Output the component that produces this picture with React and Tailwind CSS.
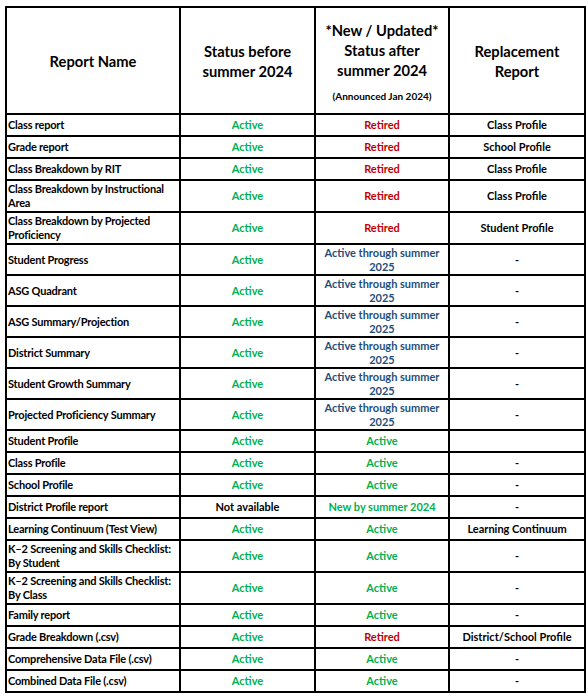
const GREEN = "text-[#00b050]";
const RED = "text-[#c00000]";
const BLUE = "text-[#1f4e79]";

const rows = [
  ["Class report", "Active", ["Retired", RED], "Class Profile"],
  ["Grade report", "Active", ["Retired", RED], "School Profile"],
  ["Class Breakdown by RIT", "Active", ["Retired", RED], "Class Profile"],
  ["Class Breakdown by Instructional Area", "Active", ["Retired", RED], "Class Profile", true],
  ["Class Breakdown by Projected Proficiency", "Active", ["Retired", RED], "Student Profile", true],
  ["Student Progress", "Active", ["Active through summer 2025", BLUE], "-", true],
  ["ASG Quadrant", "Active", ["Active through summer 2025", BLUE], "-", true],
  ["ASG Summary/Projection", "Active", ["Active through summer 2025", BLUE], "-", true],
  ["District Summary", "Active", ["Active through summer 2025", BLUE], "-", true],
  ["Student Growth Summary", "Active", ["Active through summer 2025", BLUE], "-", true],
  ["Projected Proficiency Summary", "Active", ["Active through summer 2025", BLUE], "-", true],
  ["Student Profile", "Active", ["Active", GREEN], ""],
  ["Class Profile", "Active", ["Active", GREEN], "-"],
  ["School Profile", "Active", ["Active", GREEN], "-"],
  ["District Profile report", "Not available", ["New by summer 2024", GREEN], "-"],
  ["Learning Continuum (Test View)", "Active", ["Active", GREEN], "Learning Continuum"],
  ["K–2 Screening and Skills Checklist: By Student", "Active", ["Active", GREEN], "-", true],
  ["K–2 Screening and Skills Checklist: By Class", "Active", ["Active", GREEN], "-", true],
  ["Family report", "Active", ["Active", GREEN], "-"],
  ["Grade Breakdown (.csv)", "Active", ["Retired", RED], "District/School Profile"],
  ["Comprehensive Data File (.csv)", "Active", ["Active", GREEN], "-"],
  ["Combined Data File (.csv)", "Active", ["Active", GREEN], "-"],
];

function App() {
  return (
    <div className="min-h-[697px] bg-white pl-[5px] pt-[6px] font-['Lato',sans-serif] font-bold text-black">
      <table className="w-[579px] table-fixed border-collapse border-2 border-black">
        <colgroup>
          <col className="w-[174px]" />
          <col className="w-[135px]" />
          <col className="w-[134px]" />
          <col className="w-[136px]" />
        </colgroup>
        <thead>
          <tr className="h-[107px] text-[14.7px] leading-[20px]">
            <th className="border-2 border-black text-center">Report Name</th>
            <th className="border-2 border-black text-center">
              Status before
              <br />
              summer 2024
            </th>
            <th className="border-2 border-black text-center">
              <div>*New / Updated*</div>
              <div>Status after</div>
              <div>summer 2024</div>
              <div className="mt-[10px] text-[10px] leading-[12px]">(Announced Jan 2024)</div>
            </th>
            <th className="border-2 border-black text-center">
              Replacement
              <br />
              Report
            </th>
          </tr>
        </thead>
        <tbody className="text-[11px] leading-[14px]">
          {rows.map(([name, before, [after, color], repl, tall]) => (
            <tr key={name} className={tall ? "h-[31px]" : "h-[22px]"}>
              <td className="border-2 border-black px-[1px] py-[1px] tracking-[-0.2px]">{name}</td>
              <td className={`border-2 border-black text-center ${before === "Active" ? GREEN : "text-black"}`}>
                {before}
              </td>
              <td className={`border-2 border-black px-[3px] text-center ${color}`}>{after}</td>
              <td className="border-2 border-black text-center">{repl}</td>
            </tr>
          ))}
        </tbody>
      </table>
    </div>
  );
}

export default App;
